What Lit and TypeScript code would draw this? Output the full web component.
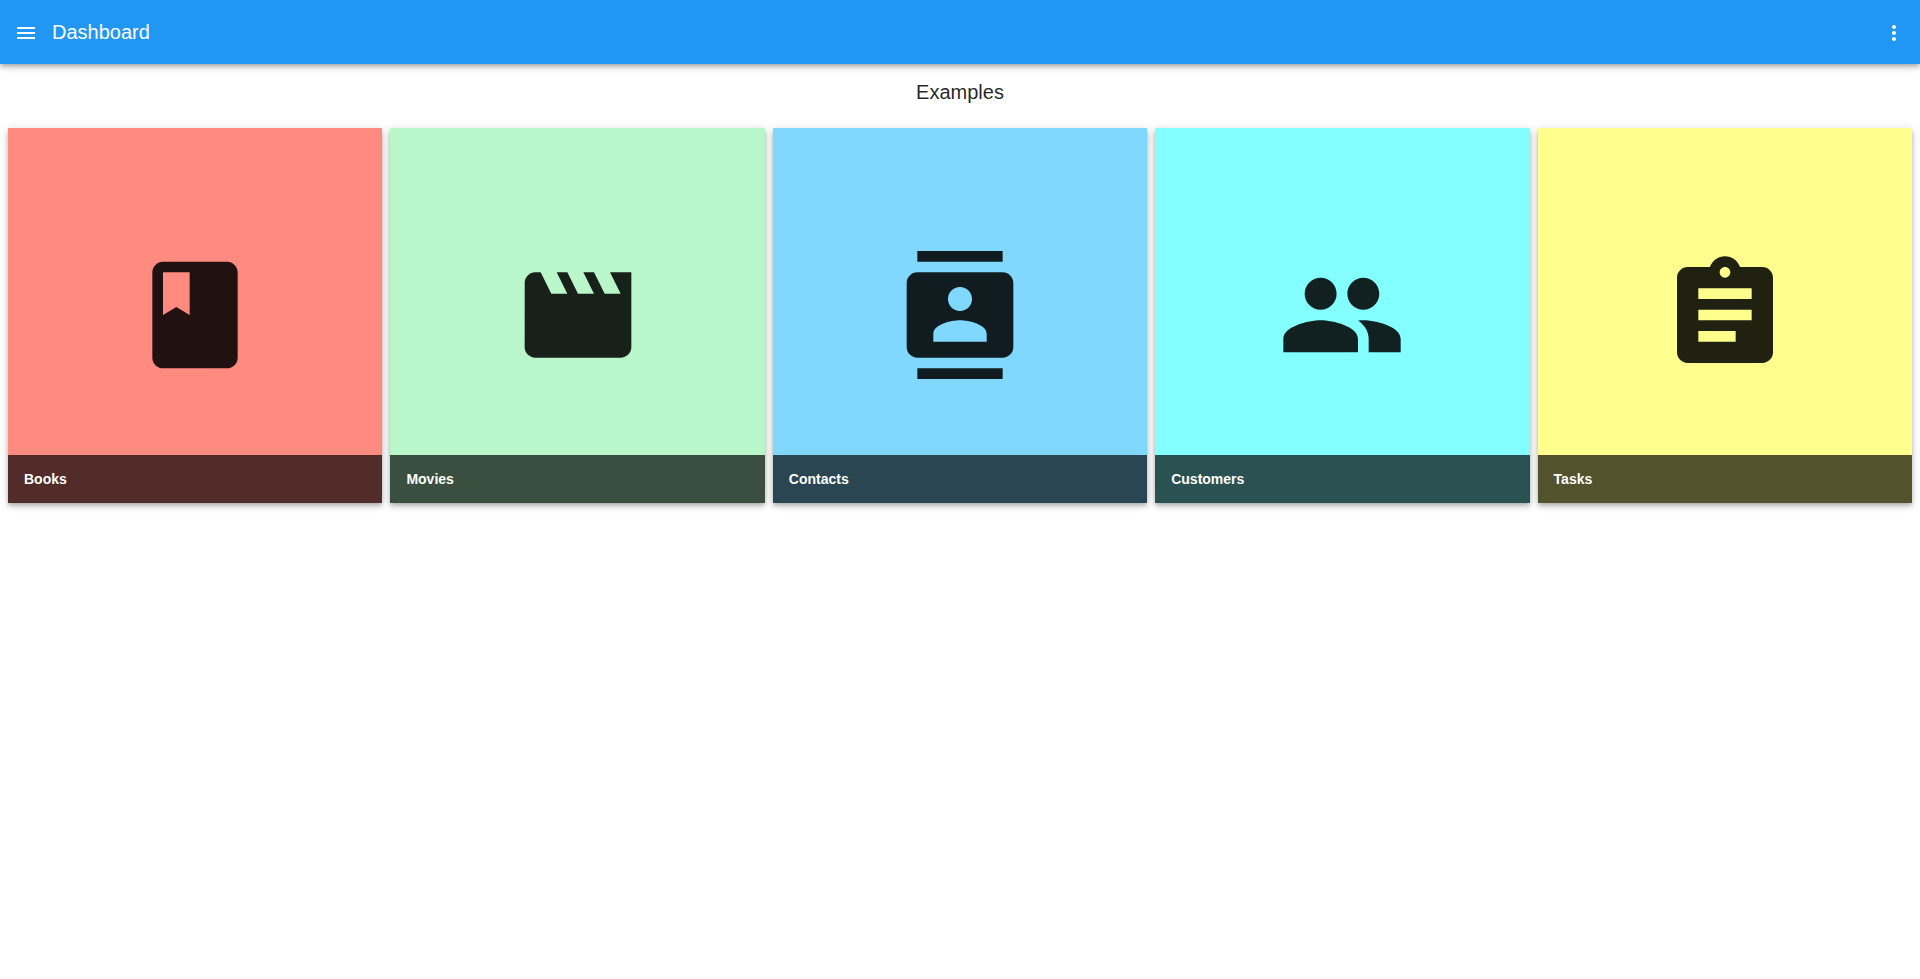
import { LitElement, html, css, svg } from "lit";
import { customElement } from "lit/decorators.js";
import { classMap } from "lit/directives/class-map.js";

const icons = {
  menu: svg`<path d="M3 18h18v-2H3v2zm0-5h18v-2H3v2zm0-7v2h18V6H3z"/>`,
  more: svg`<path d="M12 8c1.1 0 2-.9 2-2s-.9-2-2-2-2 .9-2 2 .9 2 2 2zm0 2c-1.1 0-2 .9-2 2s.9 2 2 2 2-.9 2-2-.9-2-2-2zm0 6c-1.1 0-2 .9-2 2s.9 2 2 2 2-.9 2-2-.9-2-2-2z"/>`,
  book: svg`<path d="M18 2H6c-1.1 0-2 .9-2 2v16c0 1.1.9 2 2 2h12c1.1 0 2-.9 2-2V4c0-1.1-.9-2-2-2zM6 4h5v8l-2.500-1.500L6 12V4z"/>`,
  movie: svg`<path d="M18 4l2 4h-3l-2-4h-2l2 4h-3l-2-4H8l2 4H7L5 4H4c-1.100 0-1.990.9-1.990 2L2 18c0 1.100.9 2 2 2h16c1.100 0 2-.9 2-2V4h-4z"/>`,
  contacts: svg`<path d="M20 0H4v2h16V0zM4 24h16v-2H4v2zM20 4H4c-1.100 0-2 .9-2 2v12c0 1.100.9 2 2 2h16c1.100 0 2-.9 2-2V6c0-1.100-.9-2-2-2zm-8 2.750c1.240 0 2.250 1.010 2.250 2.250s-1.010 2.250-2.250 2.250S9.750 10.240 9.750 9 10.760 6.750 12 6.750zM17 17H7v-1.500c0-1.670 3.330-2.500 5-2.500s5 .830 5 2.500V17z"/>`,
  people: svg`<path d="M16 11c1.660 0 2.990-1.340 2.990-3S17.660 5 16 5c-1.660 0-3 1.340-3 3s1.340 3 3 3zm-8 0c1.660 0 2.990-1.340 2.990-3S9.660 5 8 5C6.340 5 5 6.340 5 8s1.340 3 3 3zm0 2c-2.330 0-7 1.170-7 3.500V19h14v-2.500c0-2.330-4.670-3.500-7-3.500zm8 0c-.290 0-.620.020-.970.050 1.160.840 1.970 1.970 1.970 3.450V19h6v-2.500c0-2.330-4.670-3.500-7-3.500z"/>`,
  tasks: svg`<path d="M19 3h-4.180C14.400 1.840 13.300 1 12 1c-1.300 0-2.400.840-2.820 2H5c-1.100 0-2 .9-2 2v14c0 1.100.9 2 2 2h14c1.100 0 2-.9 2-2V5c0-1.100-.9-2-2-2zm-7 0c.550 0 1 .450 1 1s-.450 1-1 1-1-.450-1-1 .450-1 1-1zm2 14H7v-2h7v2zm3-4H7v-2h10v2zm0-4H7V7h10v2z"/>`,
};

const tiles = [
  { label: "Books", tone: "red", icon: icons.book },
  { label: "Movies", tone: "green", icon: icons.movie },
  { label: "Contacts", tone: "blue", icon: icons.contacts },
  { label: "Customers", tone: "cyan", icon: icons.people },
  { label: "Tasks", tone: "yellow", icon: icons.tasks },
];

@customElement("app-root")
export class AppRoot extends LitElement {
  static styles = css`
    :host {
      --raised: 0 2px 4px -1px rgba(0, 0, 0, 0.2), 0 4px 5px 0 rgba(0, 0, 0, 0.14),
        0 1px 10px 0 rgba(0, 0, 0, 0.12);
      display: block;
      min-height: 100vh;
      background: #fff;
      color: rgba(0, 0, 0, 0.87);
      font-family: "Liberation Sans", Arial, sans-serif;
    }
    svg {
      display: block;
      fill: currentColor;
    }
    .toolbar {
      display: flex;
      align-items: center;
      height: 64px;
      padding: 0 6px;
      background: #2196f3;
      color: #fff;
      box-shadow: var(--raised);
    }
    .title {
      flex: 1;
      margin: 0;
      padding-left: 6px;
      font-size: 20px;
      font-weight: 400;
      line-height: 24px;
    }
    .icon-button {
      padding: 9px 8px 7px;
      border: 0;
      border-radius: 50%;
      background: none;
      color: inherit;
      cursor: pointer;
    }
    .icon-button svg {
      width: 24px;
      height: 24px;
    }
    .heading {
      margin: 0;
      font-size: 20px;
      font-weight: 400;
      line-height: 56px;
      text-align: center;
    }
    .tiles {
      display: grid;
      grid-template-columns: repeat(5, 1fr);
      gap: 8px;
      padding: 8px;
    }
    .tile {
      display: grid;
      grid-template-rows: 1fr 48px;
      aspect-ratio: 936 / 937;
      color: inherit;
      text-decoration: none;
      box-shadow: var(--raised);
    }
    .tile svg {
      grid-area: 1 / 1 / 3 / 2;
      place-self: center;
      width: 128px;
      height: 128px;
    }
    .label {
      grid-area: 2 / 1;
      padding: 0 16px;
      background: rgba(0, 0, 0, 0.68);
      color: #fff;
      font-size: 14px;
      font-weight: 700;
      line-height: 48px;
    }
    .red { background: #ff8a80; }
    .green { background: #b9f6ca; }
    .blue { background: #80d8ff; }
    .cyan { background: #84ffff; }
    .yellow { background: #ffff8d; }
  `;

  render() {
    return html`
      <header class="toolbar">
        <button class="icon-button" aria-label="Menu">
          <svg viewBox="0 0 24 24" aria-hidden="true">${icons.menu}</svg>
        </button>
        <h1 class="title">Dashboard</h1>
        <button class="icon-button" aria-label="More">
          <svg viewBox="0 0 24 24" aria-hidden="true">${icons.more}</svg>
        </button>
      </header>
      <main>
        <h2 class="heading">Examples</h2>
        <nav class="tiles" aria-label="Examples">
          ${tiles.map(
            (t) => html`
              <a href="#${t.label.toLowerCase()}" class=${classMap({ tile: true, [t.tone]: true })}>
                <svg viewBox="0 0 24 24" aria-hidden="true">${t.icon}</svg>
                <span class="label">${t.label}</span>
              </a>
            `
          )}
        </nav>
      </main>
    `;
  }
}
